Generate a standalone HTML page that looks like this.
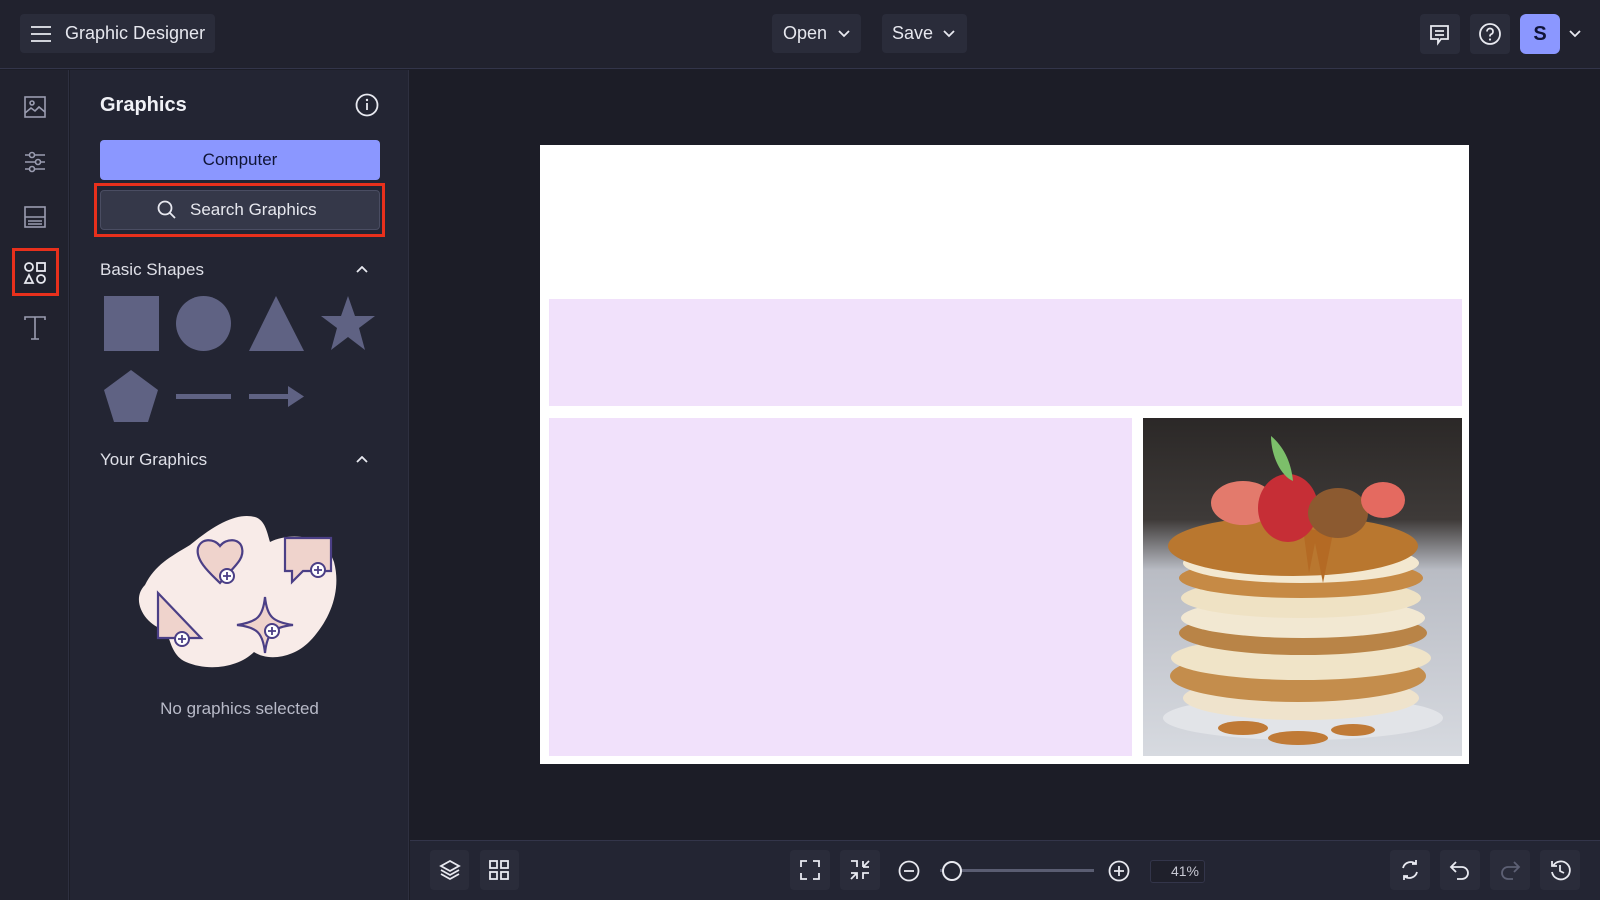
<!DOCTYPE html>
<html><head><meta charset="utf-8"><style>
*{box-sizing:border-box;margin:0;padding:0}
body{width:1600px;height:900px;overflow:hidden;background:#1c1d27;font-family:"Liberation Sans",sans-serif;color:#e6e7ee;position:relative}
.a{position:absolute}
.btn{position:absolute;background:#2a2c3a;border-radius:4px}
svg{display:block}
.ic{stroke:#9a9cb0;fill:none;stroke-width:1.6}
.wt{stroke:#e8e9f0;fill:none;stroke-width:1.8}
</style></head><body>
<!-- top bar -->
<div class="a" style="left:0;top:0;width:1600px;height:69px;background:#21222e;border-bottom:1px solid #33354a"></div>
<div class="btn" style="left:20px;top:14px;width:195px;height:39px"></div>
<svg class="a" style="left:30px;top:24px" width="22" height="20"><path class="wt" d="M1 3h20M1 10h20M1 17h20"/></svg>
<div class="a" style="left:65px;top:23px;font-size:18px;color:#e6e7ee">Graphic Designer</div>
<div class="btn" style="left:772px;top:14px;width:89px;height:39px"></div>
<div class="a" style="left:783px;top:23px;font-size:18px">Open</div>
<svg class="a" style="left:838px;top:30px" width="12" height="8"><path class="wt" d="M1 1l5 5 5-5"/></svg>
<div class="btn" style="left:882px;top:14px;width:85px;height:39px"></div>
<div class="a" style="left:892px;top:23px;font-size:18px">Save</div>
<svg class="a" style="left:943px;top:30px" width="12" height="8"><path class="wt" d="M1 1l5 5 5-5"/></svg>
<div class="btn" style="left:1420px;top:14px;width:40px;height:40px"></div>
<svg class="a" style="left:1429px;top:24px" width="22" height="22"><path class="wt" d="M2 2h17v13h-7l-3 4v-4H2z M6 7h9M6 11h9"/></svg>
<div class="btn" style="left:1470px;top:14px;width:40px;height:40px"></div>
<svg class="a" style="left:1478px;top:22px" width="24" height="24"><circle class="wt" cx="12" cy="12" r="10"/><path class="wt" d="M9 9.5a3 3 0 1 1 4 2.8c-1 .4-1 1.2-1 2.2"/><circle cx="12" cy="17.5" r="1.1" fill="#e8e9f0"/></svg>
<div class="a" style="left:1520px;top:14px;width:40px;height:40px;background:#8b97ff;border-radius:6px;color:#101438;font-weight:bold;font-size:20px;text-align:center;line-height:40px">S</div>
<svg class="a" style="left:1569px;top:30px" width="12" height="8"><path class="wt" d="M1 1l5 5 5-5"/></svg>

<!-- left rail -->
<div class="a" style="left:0;top:70px;width:69px;height:830px;background:#21222e;border-right:1px solid #2e3040"></div>
<svg class="a" style="left:24px;top:96px" width="22" height="22"><rect class="ic" x="1" y="1" width="20" height="20"/><circle class="ic" cx="8" cy="7" r="2"/><path class="ic" d="M1 17l6-5 4 3 4-4 6 5"/></svg>
<svg class="a" style="left:24px;top:151px" width="22" height="22"><path class="ic" d="M1 4h20M1 11h20M1 18h20"/><circle cx="8" cy="4" r="2.5" fill="#21222e" stroke="#9a9cb0" stroke-width="1.6"/><circle cx="14" cy="11" r="2.5" fill="#21222e" stroke="#9a9cb0" stroke-width="1.6"/><circle cx="8" cy="18" r="2.5" fill="#21222e" stroke="#9a9cb0" stroke-width="1.6"/></svg>
<svg class="a" style="left:24px;top:206px" width="22" height="22"><rect class="ic" x="1" y="1" width="20" height="20"/><path class="ic" d="M1 11h20M4 15h14M4 18h14"/></svg>
<div class="a" style="left:12px;top:248px;width:47px;height:48px;border:3px solid #e8301c"></div>
<svg class="a" style="left:23px;top:261px" width="24" height="24"><circle class="wt" cx="6" cy="6" r="4"/><rect class="wt" x="14" y="2" width="8" height="8"/><path class="wt" d="M6 14l4 8H2z"/><circle class="wt" cx="18" cy="18" r="4"/></svg>
<svg class="a" style="left:24px;top:316px" width="22" height="24"><path class="ic" d="M1 4V1h20v3M11 1v22M7 23h8"/></svg>

<!-- panel -->
<div class="a" style="left:70px;top:70px;width:339px;height:830px;background:#232533;border-right:1px solid #2e3040"></div>
<div class="a" style="left:100px;top:94px;font-size:20px;font-weight:bold;color:#f0f1f6">Graphics</div>
<svg class="a" style="left:355px;top:93px" width="24" height="24"><circle class="wt" cx="12" cy="12" r="10.5"/><path class="wt" d="M12 10v7"/><circle cx="12" cy="7" r="1.2" fill="#e8e9f0"/></svg>
<div class="a" style="left:100px;top:140px;width:280px;height:40px;background:#8b97ff;border-radius:4px;color:#0f1436;font-size:17px;text-align:center;line-height:40px">Computer</div>
<div class="a" style="left:94px;top:183px;width:291px;height:54px;border:3px solid #e8301c"></div>
<div class="a" style="left:100px;top:190px;width:280px;height:40px;background:#353849;border:1px solid #4a4d62;border-radius:4px;color:#e6e7ee;font-size:17px;line-height:38px;padding-left:89px">Search Graphics</div>
<svg class="a" style="left:157px;top:200px" width="20" height="20"><circle class="wt" cx="8" cy="8" r="6.5"/><path class="wt" d="M13 13l5 5"/></svg>
<div class="a" style="left:100px;top:260px;font-size:17px;color:#dfe0e8">Basic Shapes</div>
<svg class="a" style="left:356px;top:266px" width="12" height="8"><path class="wt" d="M1 6l5-5 5 5"/></svg>
<svg class="a" style="left:95px;top:290px" width="290" height="140"><g fill="#5f6283">
<rect x="9" y="6" width="55" height="55"/>
<circle cx="108.5" cy="33.5" r="27.5"/>
<path d="M181 6l28 55h-55z"/>
<path d="M253 6l7 20h20l-16 12 6 22-17-13-17 13 6-22-16-12h20z"/>
<path d="M36 80l27 20-10 32H19L9 100z"/>
<rect x="81" y="104" width="55" height="5"/>
<rect x="154" y="104" width="40" height="5"/><path d="M193 96l16 10.5-16 10.5z"/>
</g></svg>
<div class="a" style="left:100px;top:450px;font-size:17px;color:#dfe0e8">Your Graphics</div>
<svg class="a" style="left:356px;top:456px" width="12" height="8"><path class="wt" d="M1 6l5-5 5 5"/></svg>
<svg class="a" style="left:130px;top:505px" width="215" height="175" viewBox="0 0 215 175">
<path fill="#f8ebe8" d="M60 40C90 15 110 8 125 12c10 3 12 15 15 25 20-10 55-8 64 20 8 30-5 60-25 80-15 15-40 20-55 10-15 15-45 20-68 10C40 150 40 130 35 125 15 120 0 95 15 80 25 60 40 52 60 40z"/>
<g stroke="#4b3f86" stroke-width="2.2" fill="#efd3cc">
<path d="M90 78c-8-8-25-22-22-35 3-10 16-10 22-2 6-8 20-8 22 2 3 12-10 20-22 35z"/>
<path d="M155 33h46v33h-28l-11 11 0-11h-7z"/>
<path d="M28 88v45h43z"/>
<path d="M135 92c2 20 8 25 28 28-20 2-26 8-28 28-2-20-8-26-28-28 20-3 26-8 28-28z"/>
</g>
<g stroke="#4b3f86" stroke-width="2" fill="#fff">
<circle cx="97" cy="71" r="7"/><circle cx="188" cy="65" r="7"/><circle cx="52" cy="134" r="7"/><circle cx="142" cy="126" r="7"/></g>
<g stroke="#4b3f86" stroke-width="1.8"><path d="M93 71h8M97 67v8M184 65h8M188 61v8M48 134h8M52 130v8M138 126h8M142 122v8"/></g>
</svg>
<div class="a" style="left:70px;top:699px;width:339px;text-align:center;font-size:17px;color:#b8bac8">No graphics selected</div>

<!-- canvas -->
<div class="a" style="left:540px;top:145px;width:929px;height:619px;background:#fff"></div>
<div class="a" style="left:549px;top:299px;width:913px;height:107px;background:#f1e1fb"></div>
<div class="a" style="left:549px;top:418px;width:583px;height:338px;background:#f1e1fb"></div>
<svg class="a" style="left:1143px;top:418px" width="319" height="338" viewBox="0 0 319 338">
<defs><linearGradient id="bg" x1="0" y1="0" x2="0" y2="1"><stop offset="0" stop-color="#2b2827"/><stop offset=".3" stop-color="#3e3a38"/><stop offset=".45" stop-color="#b9bcc4"/><stop offset="1" stop-color="#d7dae0"/></linearGradient></defs>
<rect width="319" height="338" fill="url(#bg)"/>
<ellipse cx="160" cy="300" rx="140" ry="22" fill="#e2e4e8"/>
<g>
<ellipse cx="158" cy="280" rx="118" ry="22" fill="#efe3cc"/>
<ellipse cx="155" cy="258" rx="128" ry="26" fill="#c48d4c"/>
<ellipse cx="158" cy="240" rx="130" ry="22" fill="#f0e4c8"/>
<ellipse cx="160" cy="215" rx="124" ry="22" fill="#b98447"/>
<ellipse cx="160" cy="200" rx="122" ry="20" fill="#f2e8d2"/>
<ellipse cx="158" cy="180" rx="120" ry="20" fill="#efe2c4"/>
<ellipse cx="158" cy="160" rx="122" ry="20" fill="#c68a45"/>
<ellipse cx="158" cy="145" rx="118" ry="20" fill="#f3e8d0"/>
<ellipse cx="150" cy="128" rx="125" ry="30" fill="#b9772f"/>
</g>
<path d="M160 110l6 45 6-30 8 40 10-50z" fill="#b46a24"/>
<ellipse cx="100" cy="85" rx="32" ry="22" fill="#e37a6c"/>
<ellipse cx="145" cy="90" rx="30" ry="34" fill="#c62e36"/>
<ellipse cx="195" cy="95" rx="30" ry="25" fill="#8c5a30"/>
<ellipse cx="240" cy="82" rx="22" ry="18" fill="#e46a60"/>
<path d="M128 18c12 10 20 25 22 45-12-5-22-25-22-45z" fill="#7cbf6a"/>
<ellipse cx="155" cy="320" rx="30" ry="7" fill="#c07a36"/>
<ellipse cx="100" cy="310" rx="25" ry="7" fill="#c07a36"/>
<ellipse cx="210" cy="312" rx="22" ry="6" fill="#c07a36"/>
</svg>

<!-- bottom bar -->
<div class="a" style="left:410px;top:840px;width:1190px;height:60px;background:#232533;border-top:1px solid #33354a"></div>
<div class="btn" style="left:430px;top:850px;width:39px;height:40px"></div>
<svg class="a" style="left:439px;top:859px" width="22" height="22"><path class="wt" d="M11 2l9 5-9 5-9-5z M2 11l9 5 9-5 M2 15l9 5 9-5"/></svg>
<div class="btn" style="left:480px;top:850px;width:39px;height:40px"></div>
<svg class="a" style="left:489px;top:860px" width="20" height="20"><g class="wt"><rect x="1" y="1" width="7" height="7"/><rect x="12" y="1" width="7" height="7"/><rect x="1" y="12" width="7" height="7"/><rect x="12" y="12" width="7" height="7"/></g></svg>
<div class="btn" style="left:790px;top:850px;width:40px;height:40px"></div>
<svg class="a" style="left:800px;top:860px" width="20" height="20"><path class="wt" d="M1 7V1h6M13 1h6v6M19 13v6h-6M7 19H1v-6"/></svg>
<div class="btn" style="left:840px;top:850px;width:40px;height:40px"></div>
<svg class="a" style="left:850px;top:860px" width="20" height="20"><path class="wt" d="M1 1h6v6M13 7V1M13 7l6-6M13 7h6M1 13h6v6M7 13l-6 6M13 19v-6h6"/></svg>
<svg class="a" style="left:898px;top:860px" width="22" height="22"><circle class="wt" cx="11" cy="11" r="9.5"/><path class="wt" d="M6 11h10"/></svg>
<div class="a" style="left:940px;top:869px;width:154px;height:3px;background:#5a5d72"></div>
<div class="a" style="left:942px;top:861px;width:20px;height:20px;border:2.5px solid #e8e9f0;border-radius:50%;background:#232533"></div>
<svg class="a" style="left:1108px;top:860px" width="22" height="22"><circle class="wt" cx="11" cy="11" r="9.5"/><path class="wt" d="M6 11h10M11 6v10"/></svg>
<div class="a" style="left:1150px;top:860px;width:55px;height:23px;border:1px solid #33354a;border-radius:3px;background:#1f202b;font-size:14px;color:#c8c9d4;text-align:right;padding-right:5px;line-height:21px">41%</div>
<div class="btn" style="left:1390px;top:850px;width:40px;height:40px"></div>
<svg class="a" style="left:1399px;top:859px" width="22" height="22"><path class="wt" d="M17 5a8 8 0 0 0-13 4M5 17a8 8 0 0 0 13-4M17 1v4h-4M5 21v-4h4"/></svg>
<div class="btn" style="left:1440px;top:850px;width:40px;height:40px"></div>
<svg class="a" style="left:1449px;top:859px" width="22" height="22"><path class="wt" d="M7 3L2 8l5 5M2 8h11a6 6 0 0 1 0 12H8"/></svg>
<div class="btn" style="left:1490px;top:850px;width:40px;height:40px"></div>
<svg class="a" style="left:1499px;top:859px" width="22" height="22"><path fill="none" stroke="#5d6074" stroke-width="1.8" d="M15 3l5 5-5 5M20 8H9a6 6 0 0 0 0 12h5"/></svg>
<div class="btn" style="left:1540px;top:850px;width:40px;height:40px"></div>
<svg class="a" style="left:1549px;top:859px" width="22" height="22"><path class="wt" d="M4 7a9 9 0 1 1-1 6M3 2v5h5M11 6v6l4 2"/></svg>
</body></html>
